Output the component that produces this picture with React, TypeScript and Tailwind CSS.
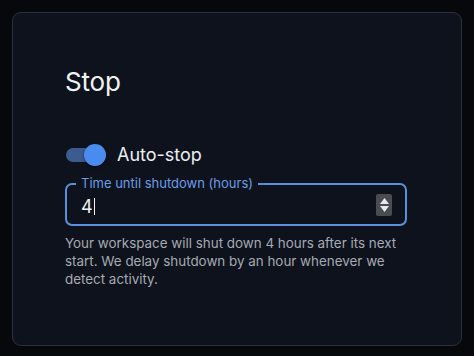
import React from "react";

export default function App() {
  return (
    <div className="w-[474px] h-[356px] bg-[#07080c] p-[12px]" style={{ fontFamily: "Inter, 'Noto Sans', sans-serif" }}>
      <div className="w-[450px] h-[334px] rounded-[9px] border border-[#2a303d] bg-[#0e121d] pl-[52px] pr-[52px] pt-[53px]">
        <h1 className="text-[26px] leading-[32px] text-[#f1f2f4] font-normal tracking-[-0.2px]">Stop</h1>
        <div className="mt-[46px] flex items-center h-[22px]">
          <div className="relative w-[42px] h-[22px] flex items-center">
            <div className="ml-[1px] w-[38px] h-[14px] rounded-full bg-[#3d5b8f]" />
            <div className="absolute left-[19px] top-0 w-[22px] h-[22px] rounded-full bg-[#4a8bf0] shadow-[0_1px_3px_rgba(0,0,0,0.5)]" />
          </div>
          <span className="ml-[10px] text-[18px] leading-[22px] text-[#eceef1]">Auto-stop</span>
        </div>
        <div className="relative mt-[17px] w-[342px] h-[43px] rounded-[7px] border-2 border-[#5b8fdc] flex items-center pl-[14px] pr-[13px]">
          <span className="absolute left-[9px] top-[-11px] px-[5px] bg-[#0e121d] text-[13px] leading-[18px] text-[#6c9de6]">
            Time until shutdown (hours)
          </span>
          <div className="flex-1 flex items-center pt-[4px]">
            <span className="text-[18px] leading-[22px] text-[#f1f2f4]">4</span>
            <span className="ml-[1px] w-[1.5px] h-[17px] bg-[#f1f2f4]" />
          </div>
          <div className="w-[16px] h-[22px] bg-[#4a4c52] rounded-[2px] flex flex-col items-center justify-center gap-[2px]">
            <svg width="9" height="6" viewBox="0 0 9 6"><path d="M4.5 0L9 6H0Z" fill="#e8e9ec" /></svg>
            <svg width="9" height="6" viewBox="0 0 9 6"><path d="M0 0H9L4.5 6Z" fill="#e8e9ec" /></svg>
          </div>
        </div>
        <p className="mt-[8px] w-[340px] text-[13.4px] leading-[18px] text-[#a6aab2]">
          Your workspace will shut down 4 hours after its next start. We delay shutdown by an hour whenever we detect activity.
        </p>
      </div>
    </div>
  );
}
